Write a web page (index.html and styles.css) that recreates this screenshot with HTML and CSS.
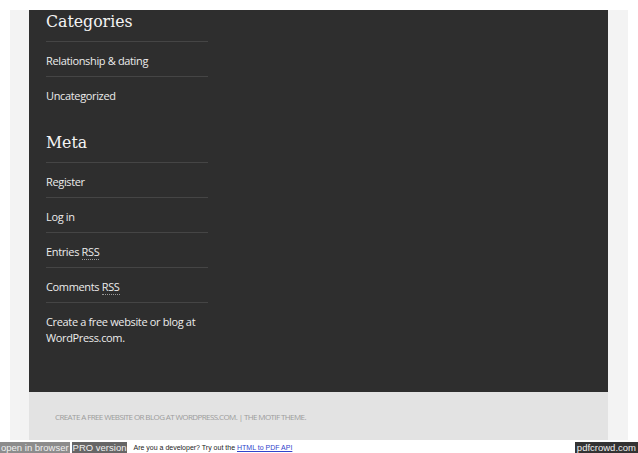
FILE: index.html
```html
<!DOCTYPE html>
<html>
<head>
<meta charset="utf-8">
<link rel="stylesheet" href="styles.css">
</head>
<body>
<div class="top"></div>
<div class="page">
  <div class="panel">
    <div class="widget">
      <h2 class="wtitle first">Categories</h2>
      <ul class="wlist">
        <li>Relationship &amp; dating</li>
        <li>Uncategorized</li>
      </ul>
    </div>
    <div class="widget">
      <h2 class="wtitle">Meta</h2>
      <ul class="wlist">
        <li>Register</li>
        <li>Log in</li>
        <li>Entries <abbr class="ab">RSS</abbr></li>
        <li>Comments <abbr class="ab">RSS</abbr></li>
        <li>Create a free website or blog at WordPress.com.</li>
      </ul>
    </div>
  </div>
  <div class="footer">
    <span class="credit">Create a free website or blog at WordPress.com. | The Motif Theme.</span>
  </div>
</div>
<div class="pdfbar">
  <span class="b1">open in browser</span><span class="b2">PRO version</span><span class="dev">Are you a developer? Try out the <span class="lnk">HTML to PDF API</span></span>
  <span class="b3">pdfcrowd.com</span>
</div>
</body>
</html>
```
FILE: styles.css
```css
html, body {
  margin: 0;
  padding: 0;
  background: #ffffff;
  width: 638px;
  height: 453px;
  overflow: hidden;
}
.top {
  height: 10px;
}
.page {
  margin: 0 10px;
  padding: 0 20px 0 19px;
  background: #f3f3f3;
  display: flex;
  flex-direction: column;
}
.panel {
  height: 382px;
  background: #2e2e2e;
  padding-left: 17px;
  overflow: hidden;
}
.widget {
  width: 162px;
}
.wtitle {
  margin: 19px 0 8px 0;
  font-family: "DejaVu Serif Condensed", "DejaVu Serif", serif;
  font-stretch: condensed;
  font-weight: normal;
  font-size: 17.5px;
  line-height: 24px;
  color: #f4f4f4;
}
.wtitle.first {
  margin-top: -1px;
}
.wlist {
  list-style: none;
  margin: 0;
  padding: 0;
}
.wlist li {
  border-top: 1px solid #454545;
  padding: 11px 0 7px 0;
  font-family: "Open Sans", "Noto Sans", sans-serif;
  font-size: 11px;
  letter-spacing: -0.35px;
  line-height: 16px;
  color: #ececec;
}
.ab {
  text-decoration: none;
  border-bottom: 1px dotted #9a9a9a;
}
.footer {
  height: 48px;
  background: #e3e3e3;
  display: flex;
  align-items: center;
  padding-left: 26px;
}
.credit {
  font-family: "Open Sans", sans-serif;
  font-size: 8px;
  letter-spacing: -0.6px;
  text-transform: uppercase;
  color: #9c9c9c;
  white-space: nowrap;
}
.pdfbar {
  margin-top: 2px;
  height: 11px;
  display: flex;
  align-items: stretch;
  font-family: "Liberation Sans", Arial, sans-serif;
  white-space: nowrap;
}
.b1, .b2, .b3 {
  font-size: 9.5px;
  line-height: 11px;
  color: #f0f0f0;
  padding: 0 1px;
  white-space: nowrap;
}
.b1 {
  background: #8c8c8c;
  margin-right: 2px;
}
.b2 {
  background: #666666;
}
.dev {
  margin-left: 6px;
  font-size: 7px;
  line-height: 11px;
  color: #222;
}
.lnk {
  color: #3344cc;
  text-decoration: underline;
}
.b3 {
  margin-left: auto;
  background: #333333;
  padding: 0 2px;
}
```
